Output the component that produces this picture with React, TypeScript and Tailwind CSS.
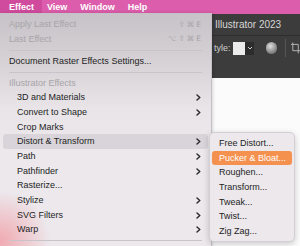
import React from "react";

type Row =
  | { kind: "item"; label: string; shortcut?: string; disabled?: boolean; sub?: boolean; indent?: boolean; active?: boolean }
  | { kind: "sep" }
  | { kind: "header"; label: string };

const rows: Row[] = [
  { kind: "item", label: "Apply Last Effect", shortcut: "⇧⌘E", disabled: true },
  { kind: "item", label: "Last Effect", shortcut: "⌥⇧⌘E", disabled: true },
  { kind: "sep" },
  { kind: "item", label: "Document Raster Effects Settings..." },
  { kind: "sep" },
  { kind: "header", label: "Illustrator Effects" },
  { kind: "item", label: "3D and Materials", sub: true, indent: true },
  { kind: "item", label: "Convert to Shape", sub: true, indent: true },
  { kind: "item", label: "Crop Marks", indent: true },
  { kind: "item", label: "Distort & Transform", sub: true, indent: true, active: true },
  { kind: "item", label: "Path", sub: true, indent: true },
  { kind: "item", label: "Pathfinder", sub: true, indent: true },
  { kind: "item", label: "Rasterize...", indent: true },
  { kind: "item", label: "Stylize", sub: true, indent: true },
  { kind: "item", label: "SVG Filters", sub: true, indent: true },
  { kind: "item", label: "Warp", sub: true, indent: true },
  { kind: "sep" },
];

const subItems = ["Free Distort...", "Pucker & Bloat...", "Roughen...", "Transform...", "Tweak...", "Twist...", "Zig Zag..."];

function Chevron() {
  return (
    <svg width="5" height="7" viewBox="0 0 5 7" aria-hidden>
      <path d="M1 0.9L3.8 3.5L1 6.1" stroke="#2a2a2a" strokeWidth="1.4" fill="none" strokeLinecap="round" strokeLinejoin="round" />
    </svg>
  );
}

function MenuRow({ row }: { row: Row }) {
  if (row.kind === "sep") {
    return (
      <div className="h-[7.3px] flex items-center px-[9px]">
        <div className="h-px w-full bg-[#c8c4c9]" />
      </div>
    );
  }
  if (row.kind === "header") {
    return <div className="h-[14.7px] flex items-center pl-[9px] text-[#a8a4a9]">{row.label}</div>;
  }
  return (
    <div
      className={`mx-[3px] h-[14.7px] flex items-center justify-between rounded-[3px] pr-[7px] ${row.indent ? "pl-[14px]" : "pl-[6px]"} ${row.active ? "bg-[#d8d4d9]" : ""} ${row.disabled ? "text-[#a8a4a9]" : "text-[#242424]"}`}
    >
      <span>{row.label}</span>
      {row.shortcut ? (
        <span className="-mr-[2px] text-[7.5px] tracking-[2px] text-[#a8a4a9] font-['DejaVu_Sans',sans-serif]">
          {row.shortcut}
        </span>
      ) : null}
      {row.sub ? <Chevron /> : null}
    </div>
  );
}

export default function App() {
  return (
    <div className="relative w-[300px] h-[246px] overflow-hidden bg-[#fbfbfb] font-['Liberation_Sans','DejaVu_Sans',sans-serif] text-[9px] leading-none">
      {/* macOS menu bar */}
      <div className="h-[14px] flex items-center bg-[#db5dab] text-white font-semibold">
        <div className="h-full w-[42px] flex items-center pl-[9px] bg-[#d04b9d]">Effect</div>
        <span className="ml-[5px]">View</span>
        <span className="ml-[13px]">Window</span>
        <span className="ml-[13px]">Help</span>
      </div>

      {/* Illustrator window chrome (left part is hidden under the menu) */}
      <div className="h-[64px] bg-[#3c3c3c] flex flex-col">
        <div className="h-[22px] flex items-center pl-[215px] text-[10px] text-[#d6d6d6] border-b border-[#2e2e2e]">
          Illustrator 2023
        </div>
        <div className="h-[24px] flex items-center pl-[214px] text-[#cfcfcf]">
          <span>tyle:</span>
          <div className="ml-[2px] w-[14px] h-[13px] bg-[#ebebeb]" />
          <div className="w-[10px] h-[13px] bg-[#2c2c2c] flex items-center justify-center">
            <svg width="6" height="4" viewBox="0 0 6 4" aria-hidden>
              <path d="M1 1l2 2 2-2" stroke="#cfcfcf" strokeWidth="1" fill="none" />
            </svg>
          </div>
          <div className="ml-[12px] w-[12px] h-[12px] rounded-full bg-[radial-gradient(circle_at_40%_35%,#e0e0e0,#8a8a8a_60%,#555)]" />
          <div className="ml-[8px] w-px h-[18px] bg-[#555]" />
          <svg className="ml-[5px]" width="10" height="12" viewBox="0 0 10 12" aria-hidden>
            <path d="M2 0v9h8M0 2h8v10" stroke="#bdbdbd" strokeWidth="1" fill="none" />
          </svg>
        </div>
      </div>

      {/* Effect menu */}
      <div className="absolute left-0 top-[13px] w-[212px] h-[250px] pt-[4px] border-r border-[#c4c0c5] shadow-[1px_0_3px_rgba(0,0,0,0.15)] bg-[radial-gradient(circle_at_0px_228px,rgba(243,128,138,0.6),rgba(243,128,138,0)_50px),linear-gradient(to_bottom,#c6c2c7_0px,#d6d2d6_50px,#e8e4e8_95px,#ece8ec_140px)]">
        {rows.map((r, i) => (
          <MenuRow key={i} row={r} />
        ))}
      </div>

      {/* Distort & Transform submenu */}
      <div className="absolute left-[209px] top-[132px] w-[86px] h-[110px] pt-[3px] rounded-[5px] bg-[#ece8ec] border border-[#d3cfd4] shadow-[0_2px_6px_rgba(0,0,0,0.2)]">
        {subItems.map((s) => (
          <div
            key={s}
            className={`mx-[2px] h-[14.7px] flex items-center pl-[7px] rounded-[3px] ${s === "Pucker & Bloat..." ? "bg-[#f5914f] text-white" : "text-[#242424]"}`}
          >
            {s}
          </div>
        ))}
      </div>
    </div>
  );
}
